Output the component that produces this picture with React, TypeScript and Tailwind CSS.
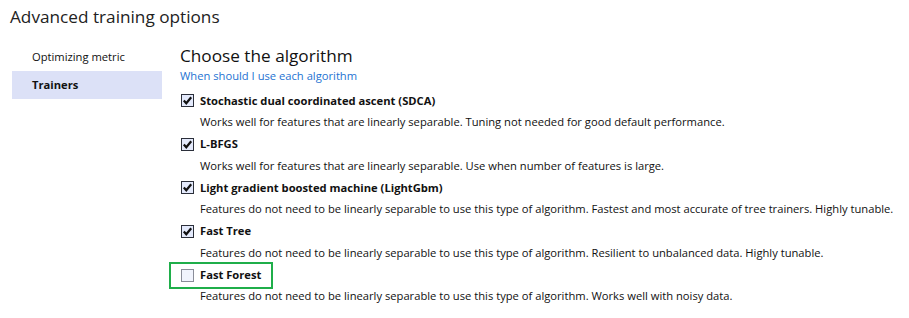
import React from "react";

const items = [
  { name: "Stochastic dual coordinated ascent (SDCA)", desc: "Works well for features that are linearly separable. Tuning not needed for good default performance.", checked: true },
  { name: "L-BFGS", desc: "Works well for features that are linearly separable. Use when number of features is large.", checked: true },
  { name: "Light gradient boosted machine (LightGbm)", desc: "Features do not need to be linearly separable to use this type of algorithm. Fastest and most accurate of tree trainers. Highly tunable.", checked: true },
  { name: "Fast Tree", desc: "Features do not need to be linearly separable to use this type of algorithm. Resilient to unbalanced data. Highly tunable.", checked: true },
  { name: "Fast Forest", desc: "Features do not need to be linearly separable to use this type of algorithm. Works well with noisy data.", checked: false, highlight: true },
];

function Box({ checked }: { checked: boolean }) {
  if (checked) {
    return (
      <div className="w-[13px] h-[13px] shrink-0 border border-[#2b2f3a] bg-[#e4eafc] flex items-center justify-center">
        <svg width="11" height="11" viewBox="0 0 11 11">
          <path d="M1.8 5.4 L4.3 8.2 L9.2 2.3" fill="none" stroke="#111" strokeWidth="2.2" />
        </svg>
      </div>
    );
  }
  return <div className="w-[13px] h-[13px] shrink-0 border border-[#8a8d99] bg-[#f1f4fd]" />;
}

export default function App() {
  return (
    <div className="w-[909px] h-[318px] bg-white text-[#111] overflow-hidden" style={{ fontFamily: '"Open Sans", "Noto Sans", sans-serif' }}>
      <div className="pl-[10px] pt-[4px] text-[17.2px] leading-[26px] text-[#222]">Advanced training options</div>
      <div className="flex mt-[15px]">
        <div className="w-[150px] shrink-0 ml-[12px] -mt-[2px] flex flex-col">
          <div className="h-[28px] pl-[20px] flex items-center text-[11.2px]">Optimizing metric</div>
          <div className="h-[28px] pl-[20px] flex items-center text-[11.2px] font-bold bg-[#dce1f7]">Trainers</div>
        </div>
        <div className="ml-[18px] flex flex-col">
          <div className="text-[17.2px] leading-[22px]">Choose the algorithm</div>
          <div className="text-[11.2px] leading-[16px] mt-[1px] text-[#1e73d2]">When should I use each algorithm</div>
          <div className="flex flex-col mt-[6px]">
            {items.map((it) => (
              <div key={it.name} className="flex flex-col">
                <div className="h-[22px] flex items-center">
                  {it.highlight ? (
                    <div className="-ml-[11px] h-[27px] w-[104px] border-2 border-[#1fae4a] flex items-center gap-[6px] pl-[10px]">
                      <Box checked={it.checked} />
                      <span className="text-[11.2px] font-bold">{it.name}</span>
                    </div>
                  ) : (
                    <div className="flex items-center gap-[6px] pl-[1px]">
                      <Box checked={it.checked} />
                      <span className="text-[11.2px] font-bold">{it.name}</span>
                    </div>
                  )}
                </div>
                <div className="h-[21.5px] flex items-center pl-[20px] text-[11.2px] whitespace-nowrap">{it.desc}</div>
              </div>
            ))}
          </div>
        </div>
      </div>
    </div>
  );
}
